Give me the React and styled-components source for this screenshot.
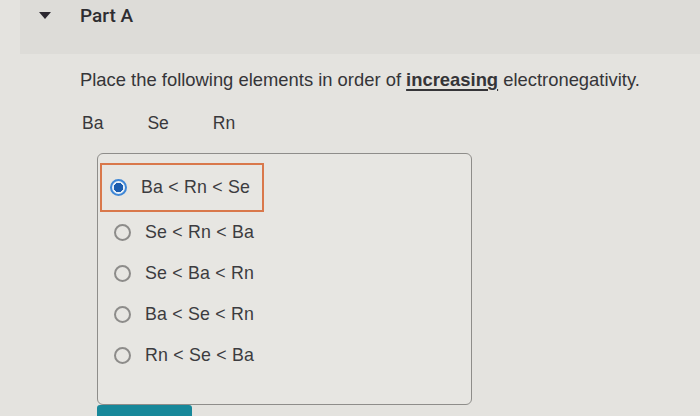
import styled, { createGlobalStyle } from 'styled-components';

const GlobalStyle = createGlobalStyle`
    body {
        margin: 0;
        background: #e4e3df;
        font-family: "Liberation Sans", Arial, sans-serif;
        color: #333336;
    }
`;

const options = [
    { label: 'Ba < Rn < Se', selected: true },
    { label: 'Se < Rn < Ba' },
    { label: 'Se < Ba < Rn' },
    { label: 'Ba < Se < Rn' },
    { label: 'Rn < Se < Ba' },
];

const App = () => {
    return (
        <Page>
            <GlobalStyle />
            <Header>
                <Caret viewBox="0 0 12 7">
                    <path d="M0 0 L12 0 L6 7 Z" fill="#2b2830" />
                </Caret>
                <Title>Part A</Title>
            </Header>
            <Body>
                <Prompt>
                    Place the following elements in order of <Strong>increasing</Strong> electronegativity.
                </Prompt>
                <Elements>
                    <span>Ba</span>
                    <span>Se</span>
                    <span>Rn</span>
                </Elements>
                <Choices>
                    {options.map((o) => (
                        <Option key={o.label} selected={o.selected}>
                            <Radio selected={o.selected} />
                            <Label>{o.label}</Label>
                        </Option>
                    ))}
                </Choices>
                <Submit />
            </Body>
        </Page>
    );
};

const Page = styled.div`
    width: 700px;
    height: 416px;
    overflow: hidden;
`;

const Header = styled.div`
    height: 54px;
    background: #dddcd8;
    margin-left: 20px;
    display: flex;
    align-items: flex-start;
    padding: 4px 0 0 19px;
    box-sizing: border-box;
    gap: 29px;
`;

const Caret = styled.svg`
    width: 12px;
    height: 7px;
    margin-top: 8px;
`;

const Title = styled.div`
    font-family: Roboto, "Liberation Sans", sans-serif;
    font-size: 19px;
    line-height: 24px;
    font-weight: 500;
    color: #2e2d31;
`;

const Body = styled.div`
    padding: 14px 0 0 80px;
`;

const Prompt = styled.div`
    font-size: 18.4px;
    line-height: 24px;
    color: #353538;
`;

const Strong = styled.span`
    font-weight: bold;
    text-decoration: underline;
    text-decoration-thickness: 2px;
    text-underline-offset: 3px;
`;

const Elements = styled.div`
    display: flex;
    gap: 44px;
    margin: 20px 0 0 2px;
    font-size: 17.5px;
    line-height: 22px;
    color: #38383b;
`;

const Choices = styled.div`
    width: 375px;
    height: 252px;
    margin: 19px 0 0 17px;
    border: 1.5px solid #8e8d8a;
    border-radius: 6px;
    padding: 9px 0 0 2px;
    box-sizing: border-box;
    background: #e7e6e2;
`;

const Option = styled.div`
    display: flex;
    align-items: center;
    gap: 14px;
    box-sizing: border-box;
    height: ${(p) => (p.selected ? '49px' : '41px')};
    width: ${(p) => (p.selected ? '164px' : 'auto')};
    padding-left: ${(p) => (p.selected ? '8px' : '14px')};
    border: ${(p) => (p.selected ? '2px solid #d9784b' : 'none')};
`;

const Radio = styled.span`
    width: 17px;
    height: 17px;
    border-radius: 50%;
    box-sizing: border-box;
    flex-shrink: 0;
    border: 2px solid ${(p) => (p.selected ? '#3f87d6' : '#8d8c8a')};
    background: ${(p) =>
        p.selected ? 'radial-gradient(circle, #1b5cae 0 4.5px, #e8f0f8 5px)' : 'transparent'};
`;

const Label = styled.span`
    font-size: 17.8px;
    color: #3c3c3f;
    letter-spacing: 0.2px;
`;

const Submit = styled.div`
    width: 95px;
    height: 30px;
    margin: 0 0 0 17px;
    background: #17889a;
    border-radius: 3px;
`;

export default App;
